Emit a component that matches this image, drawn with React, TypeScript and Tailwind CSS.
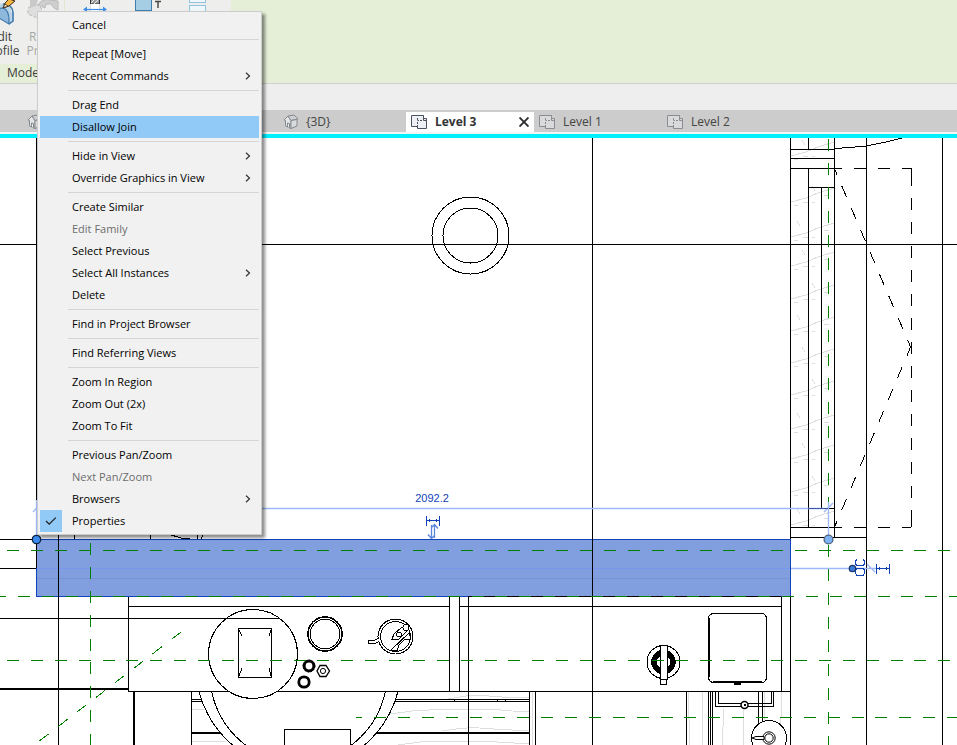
import type { ReactNode } from 'react'
import clsx from 'clsx'

type TMenuItem = {
  label: string;
  submenu?: boolean;
  disabled?: boolean;
  active?: boolean;
  checked?: boolean;
}

const menuGroups: TMenuItem[][] = [
  [{ label: 'Cancel' }],
  [{ label: 'Repeat [Move]' }, { label: 'Recent Commands', submenu: true }],
  [{ label: 'Drag End' }, { label: 'Disallow Join', active: true }],
  [{ label: 'Hide in View', submenu: true }, { label: 'Override Graphics in View', submenu: true }],
  [
    { label: 'Create Similar' },
    { label: 'Edit Family', disabled: true },
    { label: 'Select Previous' },
    { label: 'Select All Instances', submenu: true },
    { label: 'Delete' },
  ],
  [{ label: 'Find in Project Browser' }],
  [{ label: 'Find Referring Views' }],
  [{ label: 'Zoom In Region' }, { label: 'Zoom Out (2x)' }, { label: 'Zoom To Fit' }],
  [
    { label: 'Previous Pan/Zoom' },
    { label: 'Next Pan/Zoom', disabled: true },
    { label: 'Browsers', submenu: true },
    { label: 'Properties', checked: true },
  ],
]

function MenuRow({ item }: { item: TMenuItem }) {
  return (
    <button
      type="button"
      role={item.checked ? 'menuitemcheckbox' : 'menuitem'}
      aria-checked={item.checked}
      disabled={item.disabled}
      className={clsx(
        'flex h-[22px] w-full items-center text-left',
        item.active && 'bg-[#91c9f7]',
        item.disabled ? 'text-[#6d6d6d]' : 'text-black'
      )}
    >
      <span className={clsx('mr-[10px] flex h-[22px] w-[22px] items-center justify-center', item.checked && 'bg-[#91c9f7]')}>
        {item.checked && (
          <svg width="12" height="10" viewBox="0 0 12 10" fill="none" stroke="#222" strokeWidth="1.3">
            <path d="M1 5 L4.2 8.2 L10.8 1.6" />
          </svg>
        )}
      </span>
      <span className="flex-1 whitespace-nowrap">{item.label}</span>
      {item.submenu && (
        <svg className="mr-2" width="6" height="8" viewBox="0 0 6 8" fill="none" stroke="#333" strokeWidth="1.2">
          <path d="M1 0.7 L4.5 4 L1 7.3" />
        </svg>
      )}
    </button>
  )
}

function ContextMenu() {
  return (
    <div
      role="menu"
      className="absolute left-[37px] top-[11px] w-[225px] border border-[#ccc] bg-[#f1f1f1] p-[2px] font-['Open_Sans',sans-serif] text-[11px] leading-4 shadow-[3px_3px_3px_rgba(0,0,0,0.45)]"
    >
      {menuGroups.map((group, i) => (
        <div key={group[0].label} role="group">
          {i > 0 && <div className="my-[3px] ml-7 h-px bg-[#d5d5d5]" />}
          {group.map(item => (
            <MenuRow key={item.label} item={item} />
          ))}
        </div>
      ))}
    </div>
  )
}

function RibbonButton({ icon, lines, disabled }: { icon: ReactNode; lines: string[]; disabled?: boolean }) {
  return (
    <button type="button" disabled={disabled} className={clsx('flex w-[43px] shrink-0 flex-col items-center', disabled ? 'text-[#a6a6a6]' : 'text-[#3c3c3c]')}>
      {icon}
      {lines.map(line => (
        <span key={line} className="block leading-[14px]">{line}</span>
      ))}
    </button>
  )
}

function EditProfileIcon() {
  return (
    <svg width="43" height="30" viewBox="-20 0 43 30">
      <path d="M-6 6 L3 3 Q11 3 11 12 L14 12 L14 20 L9 24 L-6 14 Z" fill="#b9d5ea" />
      <path d="M-6 9 L3 8 Q9 10 9 20 L9 24 L-6 15 Z" fill="#8fb9dc" stroke="#3f78ad" strokeWidth="1.2" />
      <path d="M3 4 Q12 4 13 12 L13 21 L9 24" fill="none" stroke="#3f78ad" strokeWidth="1.5" />
      <path d="M3 8 L5 3 L9 -1 L15 1 L9 6 Z" fill="#f4b63f" stroke="#3b2b18" strokeWidth="1" />
      <path d="M3 8 L5 4 L8 6 Z" fill="#fff1d0" stroke="#3b2b18" strokeWidth="0.8" />
    </svg>
  )
}

function ResetProfileIcon() {
  return (
    <svg width="43" height="30" viewBox="23 0 43 30" stroke="#b9b9b9">
      <path d="M28 8 L36 3 L42 9 L42 20 L28 14 Z" fill="#dedede" strokeDasharray="3 2" />
      <path d="M30 0 L38 0 L36 6 L30 8 Z" fill="#c9c9c9" stroke="none" />
      <path d="M38 5 Q42 -2 50 0 L58 1 L58 10 L54 8 L51 4 L46 4 L45 8 Z" fill="#cfcfcf" />
    </svg>
  )
}

function Ribbon() {
  return (
    <header className="h-[84px] shrink-0 border-b border-[#cfcfcf] bg-[#e5efd7] font-['Open_Sans',sans-serif] text-[12px]">
      <div className="w-[231px]">
        <div className="flex h-16 items-start overflow-hidden bg-[#eeefec]">
          <div className="-ml-5 flex h-16 w-[85px] shrink-0 border-r border-[#e0e6cf]">
            <RibbonButton icon={<EditProfileIcon />} lines={['Edit', 'Profile']} />
            <RibbonButton icon={<ResetProfileIcon />} lines={['Reset', 'Profile']} disabled />
          </div>
          <div className="flex pl-[18px]">
            <button type="button" aria-label="Attach" className="w-[51px]">
              <svg width="24" height="12" viewBox="0 0 24 12">
                <rect x="7.5" y="-3" width="9" height="7" fill="#999" stroke="#333" />
                <path d="M8 3 L12 -1 M11 4 L16 -1" stroke="#eee" />
                <path d="M7.5 4 V12 M16.5 4 V12" stroke="#ddd" />
                <rect x="8" y="4" width="8" height="7" fill="#fff" />
                <path d="M3 9.5 H21" stroke="#3c8ee8" strokeWidth="1.2" />
                <path d="M0 9.5 L4 6.5 V12 Z M24 9.5 L20 6.5 V12 Z" fill="#3c8ee8" />
              </svg>
            </button>
            <button type="button" aria-label="Type" className="w-[54px]">
              <svg width="28" height="12" viewBox="0 0 28 12">
                <rect x="1.5" y="-2" width="16" height="12.5" fill="#a5cde4" stroke="#3f7fae" />
                <path d="M21 1.5 H27 M24 1 V8" stroke="#444" strokeWidth="1.4" />
              </svg>
            </button>
            <button type="button" aria-label="Split">
              <svg width="20" height="12" viewBox="0 0 20 12" fill="#eff7fb" stroke="#8fc3df">
                <rect x="1.5" y="-3" width="16" height="5.5" />
                <rect x="1.5" y="5.5" width="16" height="9" />
              </svg>
            </button>
          </div>
        </div>
        <div className="pl-[7px] leading-[18px] text-[#3c3c3c]">Mode</div>
      </div>
    </header>
  )
}

function HouseIcon() {
  return (
    <svg width="16" height="16" viewBox="0 0 16 16" fill="#e3e5e7" stroke="#85898d" strokeLinejoin="round">
      <path d="M1 6 L5 2 L8 6.5 V14.5 L2.5 12 V6.5 Z" />
      <path d="M5 2 L11 1 L15 5 L8 6.5 Z" fill="#cdd0d3" />
      <path d="M8 6.5 L14 5.5 V12 L8 14.5 Z" fill="#d9dcdf" />
      <path d="M4.5 13 V9 L6.5 9.5 V13.8" />
    </svg>
  )
}

function PlanIcon({ active }: { active?: boolean }) {
  return (
    <svg width="17" height="16" viewBox="0 0 17 16" fill={active ? '#eef0f4' : '#d9dadb'} stroke={active ? '#4b5261' : '#8b8d90'}>
      <path d="M0.5 1.5 H12.5 V4.5 H15.5 V14.5 H6.5 V12.5 H0.5 Z" />
      <path d="M6.5 4 V6 M6.5 8 V10 M6.5 11 V14 M6.5 6.5 H8 M9 6.5 H11 M12.5 1.5 V6.5 H15" fill="none" />
    </svg>
  )
}

function ViewTab({ label, icon, active }: { label?: string; icon: ReactNode; active?: boolean }) {
  return (
    <div className={clsx('flex w-32 shrink-0 items-center', active ? 'bg-white' : 'text-[#444]')}>
      <button type="button" role="tab" aria-selected={!!active} className="flex h-5 flex-1 items-center gap-[7px] pl-[5px]">
        {icon}
        <span className={clsx(active && 'font-bold text-[#333]')}>{label}</span>
      </button>
      {active && (
        <button type="button" aria-label="Close view" className="mr-[5px]">
          <svg width="10" height="10" viewBox="0 0 10 10" stroke="#2d2d2d" strokeWidth="1.9">
            <path d="M0.5 0.5 L9.5 9.5 M9.5 0.5 L0.5 9.5" />
          </svg>
        </button>
      )}
    </div>
  )
}

// left-hand height of each timber grain line in the wall cavity
const hatchRows = [152, 198, 233, 262, 295, 327, 359, 391, 425, 455, 488, 521]

function FloorPlan() {
  return (
    <svg
      className="block min-h-0 w-full flex-1"
      viewBox="0 138 957 607"
      preserveAspectRatio="xMinYMin slice"
      fill="none"
      stroke="#000"
      shapeRendering="crispEdges"
      role="img"
      aria-label="Level 3 floor plan"
    >
      <defs>
        <clipPath id="below-counter">
          <rect x="0" y="692" width="957" height="60" />
        </clipPath>
        <clipPath id="wall-cavity">
          <path d="M791 138 H834 V527 H791 Z" />
        </clipPath>
      </defs>

      {/* wood grain */}
      <g stroke="#dedede" clipPath="url(#wall-cavity)">
        {hatchRows.map((y, i) => (
          <g key={y}>
            <path d={`M791 ${y + 4} L806 ${y} L818 ${y - 5} L834 ${y - 10}`} />
            <path d={`M794 ${y + 7} h4 M803 ${y + 4} h5 M812 ${y + 4} h3 M824 ${y - 3} h5`} />
            <path d={`M${[802, 812, 797][i % 3]} ${y - 12} l3 5`} />
          </g>
        ))}
      </g>
      <g stroke="#dedede">
        <path d="M191 709.5 H204 M191 741.5 H226 M448 699 L466 696 L482 695.5 L508 697.5 H529" />
        <path d="M390 714 L412 711 L438 709.5 H496 L512 711 L529 711.5 M442 731 L456 729 L472 727.5 L494 729 L529 731" />
        <path d="M398 745 L424 741.5 H488 L514 743 L529 744 M532.5 692 V745" />
        <path d="M688 692 L690 745 M703 692 L702 745 M724 709 L722 745 M743.5 710 V745 M764 692 V722 M782 692 L780 745" />
      </g>

      {/* selected wall */}
      <rect x="36.5" y="539.5" width="754" height="57" fill="#819edf" stroke="#1242b8" />
      <path d="M37 568.5 H790" stroke="#7796ee" />
      <path d="M37 578.5 H790" stroke="#7892d2" />

      {/* structure */}
      <path d="M0 244.5 H957 M36.5 138 V500 M36.5 540 V568 M0 539.5 H36 M0 568.5 H36" />
      <path d="M58.5 520 V745 M592.5 138 V745 M866.5 138 V745 M942.5 138 V745" />
      <path d="M74.5 530 V539 M150.5 530 V539 M197.5 530 V539 M203 535 L201 539 M168 534 L181 538 L190 539" />
      <path d="M0 618.5 H280 M128.5 597 V691 M128.5 606.5 H449 M128 691.5 H790" />
      <path d="M449.5 597 V691 M459.5 597 V691 M468.5 597 V745 M459 606.5 H781 M781.5 597 V691 M468 596.5 H781" />
      <path d="M0 689 H128 M134 692 V745" strokeWidth="2" />
      <path d="M790.5 138 V539 M790.5 597 V745 M834.5 138 V537" />
      <path d="M790 149.5 H834 M790 158.5 H834 M790 168.5 H834 M808.5 138 V149 M808.5 168 V527" />
      <path d="M808 187.5 H834 M821.5 187 V508 M808 508.5 H834 M790 527.5 H834 M790 537.5 H866" />
      <path d="M834 148.5 L850 147.5 L866 146 L884 142.5 L902 138" />

      {/* window swing */}
      <path d="M834 168.5 H911 M834 527.5 H911" strokeDasharray="12 12" strokeDashoffset="4" />
      <path d="M911.5 168 V186 M911.5 515 V527" />
      <path d="M911.5 198 V522" strokeDasharray="12 12" />
      <path d="M835 170 L911 348 M835 526 L911 346" strokeDasharray="12 12" strokeDashoffset="7" />

      {/* pendant lamp */}
      <circle cx="470.5" cy="235.5" r="38.5" />
      <circle cx="470.5" cy="235.5" r="27.5" />

      {/* dining set */}
      <g clipPath="url(#below-counter)">
        <circle cx="298.5" cy="666.7" r="102.4" fill="#fff" />
        <circle cx="298.5" cy="674" r="88.6" />
      </g>
      <path d="M284.5 745 V729.5 H350.5 V745" />
      <path d="M191.5 692 V745 M191 699.5 H202 M191 701.5 H202 M395 699.5 H529 M395 701.5 H529 M454.5 699 V702 M497.5 699 V702 M505.5 699 V702" />
      <path d="M191 733 H221 M376 733 H529" strokeWidth="2" />
      <path d="M529.5 692 V745 M535.5 692 V745" />

      {/* worktop objects */}
      <circle cx="253" cy="654" r="44.5" fill="#fff" />
      <path d="M226 618.5 H280" />
      <rect x="238.5" y="628.5" width="33" height="49" />
      <path d="M239 630 L242 636 M271 630 L269 636 M239 676 L242 668 M271 676 L269 668" />
      <circle cx="325" cy="634" r="17" strokeWidth="1.5" />
      <circle cx="325" cy="634" r="14.8" />
      <g shapeRendering="auto">
        <circle cx="309" cy="666" r="4.8" strokeWidth="2.8" />
        <circle cx="309" cy="666" r="6" strokeWidth="1" strokeDasharray="2 1" />
        <path d="M320 665.5 H326 L329.5 671 L326 676.5 H320 L317 671 Z" strokeWidth="1.3" />
        <circle cx="323" cy="671" r="2.6" />
        <circle cx="304" cy="682" r="5.2" strokeWidth="2.8" />
      </g>
      <circle cx="395.5" cy="636.5" r="17.5" />
      <circle cx="395.5" cy="636.5" r="15" />
      <path d="M379 638 L375 640 L368 640.5 V644 L375 643.5 L379 641.5" fill="#fff" />
      <path d="M392 639 L394 634 L401 628 L408 627 L406 632 L399 639 Z" />
      <circle cx="399" cy="634.5" r="2.5" />
      <circle cx="406" cy="627.5" r="3" fill="#fff" />
      <path d="M391 650 L409 633 L411 638 M397 651 L399 645 L404 640 L411 639 M391 650.5 H397" />

      <circle cx="663.5" cy="662" r="16.5" />
      <circle cx="663.5" cy="662" r="9.5" strokeWidth="5.5" />
      <rect x="660.5" y="645.5" width="7" height="34" fill="#fff" />
      <rect x="660.5" y="679.5" width="6" height="5" fill="#fff" />
      <rect x="708.5" y="613.5" width="58" height="69" rx="5" />
      <path d="M709.5 618 V677 M713 681.5 H762" />
      <path d="M734 683.5 H741" strokeWidth="3" />

      {/* bathroom */}
      <path d="M686.5 692 V745 M708.5 692 V745 M710.5 692 V745 M712.5 692 V745" />
      <path d="M715.5 692 V706.5 H773.5 V692 M718.5 692 V703.5 H771.5 V692 M758.5 692 V725 M762.5 692 V722" />
      <circle cx="744.5" cy="705" r="3.5" fill="#fff" strokeWidth="1.5" shapeRendering="auto" />
      <rect x="744" y="704.5" width="1" height="1" />
      <circle cx="769" cy="738" r="17.5" fill="#fff" />
      <g shapeRendering="auto">
        <circle cx="769" cy="738" r="6.2" />
        <circle cx="769" cy="738" r="4.2" />
        <path d="M752 738 L756 736.5 H764 V739.5 H756 Z" fill="#fff" />
      </g>

      {/* reference planes */}
      <g stroke="#008000" strokeDasharray="12 11.88">
        <path d="M7 550.5 H957 M-6 596.5 H957 M7 660.5 H957" />
        <path d="M356 717.5 H362 M374 717.5 H957" />
        <path d="M90.5 543 V745 M828.5 139 V745" />
        <path d="M181 632 L38 742" />
      </g>

      {/* temporary dimensions */}
      <g stroke="#9db7f7" shapeRendering="auto" strokeWidth="1.3">
        <path d="M36.5 508.5 H828.5 M36.5 500 V539 M828.5 502 V539 M33 512 L40 504 M824 512 L833 503" />
        <path d="M791 568.5 H876 M867 564 L875 572" />
      </g>
      <path d="M808 508.5 H828" stroke="#3a56a8" />
      <g stroke="#1242b8">
        <path d="M426.5 516 V526 M439.5 516 V526 M427 520.5 H439 M429.5 519 V522 M436.5 519 V522" />
        <path d="M876.5 564 V574 M889.5 564 V574 M877 568.5 H889 M879.5 567 V570 M886.5 567 V570" />
        <path d="M857 559.5 L855.5 561 V564 L857 565.5 H863 L864.5 564 V561 L863 559.5 M857 568.5 H863 L864.5 570 V573.5 L863 575.5 H857 L855.5 573.5 V570 Z" />
      </g>
      <path d="M431.5 538 V525 M434.5 538 V525 M428 534.5 L431.5 538.5 L434.5 535.5 M438 528.5 L434.5 524.5 L431.5 527.5" stroke="#5b84dc" strokeWidth="1.3" shapeRendering="auto" />
      <text x="432" y="502" textAnchor="middle" fill="#1242b8" stroke="none" className="font-['Liberation_Sans',sans-serif] text-[11px]">2092.2</text>
      <g shapeRendering="auto" strokeWidth="1.3">
        <circle cx="36.5" cy="539.5" r="4.2" fill="#3c8cf0" stroke="#0c2340" />
        <circle cx="828.5" cy="539.5" r="4.4" fill="#7fb2f2" stroke="#50627c" />
        <circle cx="852.5" cy="568.5" r="3.2" fill="#3c7cd8" stroke="#1b3a6b" />
      </g>
    </svg>
  )
}

export default function App() {
  return (
    <main className="relative flex h-screen min-w-0 flex-col overflow-hidden bg-white">
      <Ribbon />
      <div className="h-[26px] shrink-0 bg-[#eeeeee]" />
      <div role="tablist" className="flex h-[22px] shrink-0 overflow-hidden bg-[#cccccc] pl-[22px] pt-[2px] font-['Open_Sans',sans-serif] text-[12px]">
        <ViewTab icon={<HouseIcon />} />
        <ViewTab icon={<HouseIcon />} />
        <ViewTab icon={<HouseIcon />} label="{3D}" />
        <ViewTab icon={<PlanIcon active />} label="Level 3" active />
        <ViewTab icon={<PlanIcon />} label="Level 1" />
        <ViewTab icon={<PlanIcon />} label="Level 2" />
      </div>
      <div className="h-[6px] shrink-0 border-t-2 border-[#f4f4f4] bg-[#00f0ff]" />
      <FloorPlan />
      <ContextMenu />
    </main>
  )
}
